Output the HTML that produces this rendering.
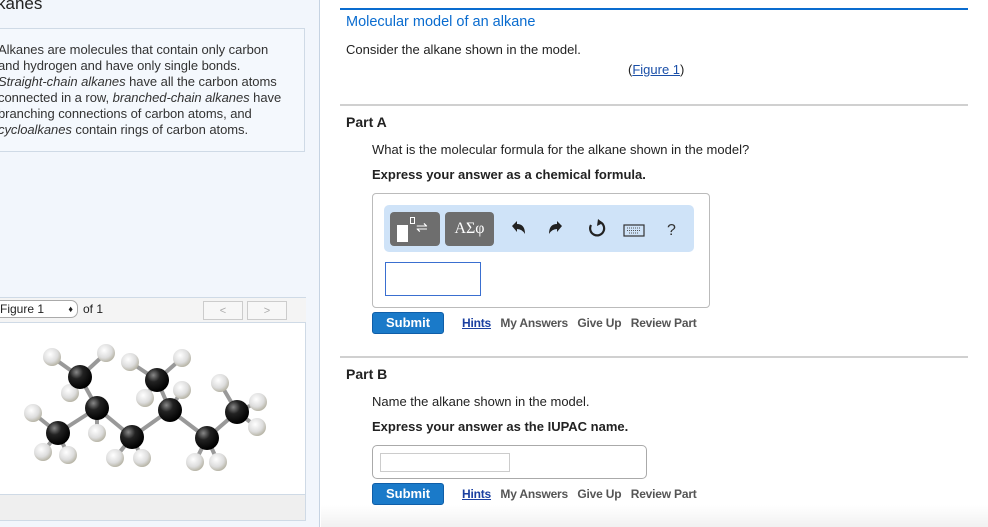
<!DOCTYPE html>
<html><head><meta charset="utf-8"><style>
*{margin:0;padding:0;box-sizing:border-box}
body{width:988px;height:527px;overflow:hidden;background:#fff;font-family:"Liberation Sans",Arial,sans-serif;color:#222;position:relative}
.a{position:absolute}
.t{font-size:13px;line-height:16px;white-space:nowrap}
.b{font-weight:bold}
.sub{background:#1a7ac9;border:1px solid #0f5ea8;border-radius:3px;color:#fff;font-weight:bold;font-size:13px;text-align:center;line-height:20px}
.lnk{font-size:12px;font-weight:bold;color:#555;letter-spacing:-0.2px;white-space:nowrap}
</style></head><body>
<div class="a" style="left:0;top:0;width:320px;height:527px;background:#f2f6fc;border-right:1px solid #c6d3e2"></div>
<div class="a" style="left:-3px;top:-6px;font-size:17px;color:#222">kanes</div>
<div class="a" style="left:-1px;top:28px;width:306px;height:124px;border:1px solid #cfdae6;background:#f4f8fd"></div>
<div class="a t" style="left:-2px;top:42px;color:#333;letter-spacing:-0.05px">Alkanes are molecules that contain only carbon<br>and hydrogen and have only single bonds.<br><i>Straight-chain alkanes</i> have all the carbon atoms<br>connected in a row, <i>branched-chain alkanes</i> have<br>branching connections of carbon atoms, and<br><i>cycloalkanes</i> contain rings of carbon atoms.</div>
<div class="a" style="left:0;top:297px;width:306px;height:26px;background:#f4f4f4;border-top:1px solid #cfdae6;border-bottom:1px solid #cfdae6"></div>
<div class="a" style="left:-2px;top:300px;width:80px;height:18px;border:1px solid #aaa;border-radius:0 7px 7px 0;background:#fff;font-size:12px;line-height:16px;padding-left:1px">Figure 1<span style="position:absolute;right:4px;top:0;font-size:9px">&#9830;</span></div>
<div class="a" style="left:83px;top:302px;font-size:12px">of 1</div>
<div class="a" style="left:203px;top:301px;width:40px;height:19px;border:1px solid #ccc;background:#f7f7f7;color:#aaa;text-align:center;font-size:11px;line-height:18px">&lt;</div>
<div class="a" style="left:247px;top:301px;width:40px;height:19px;border:1px solid #ccc;background:#f7f7f7;color:#aaa;text-align:center;font-size:11px;line-height:18px">&gt;</div>
<div class="a" style="left:0;top:323px;width:306px;height:171px;background:#fff;border-right:1px solid #cfdae6"></div>
<div class="a" style="left:0;top:494px;width:306px;height:27px;background:#efefef;border-top:1px solid #cfdae6;border-bottom:1px solid #cfdae6;border-right:1px solid #cfdae6"></div>
<svg class="a" style="left:0;top:323px" width="306" height="171" viewBox="0 323 306 171">
<defs><radialGradient id="c" cx="35%" cy="30%" r="70%"><stop offset="0" stop-color="#888"/><stop offset=".4" stop-color="#222"/><stop offset="1" stop-color="#000"/></radialGradient>
<radialGradient id="h" cx="40%" cy="35%" r="70%"><stop offset="0" stop-color="#fff"/><stop offset=".6" stop-color="#ddd"/><stop offset="1" stop-color="#b0ad9c"/></radialGradient></defs>
<g stroke="#999" stroke-width="4">
<line x1="58" y1="433" x2="97" y2="408"/><line x1="80" y1="377" x2="97" y2="408"/><line x1="97" y1="408" x2="132" y2="437"/><line x1="132" y1="437" x2="170" y2="410"/><line x1="157" y1="380" x2="170" y2="410"/><line x1="170" y1="410" x2="207" y2="438"/><line x1="207" y1="438" x2="237" y2="412"/>
<line x1="58" y1="433" x2="33" y2="413"/><line x1="58" y1="433" x2="43" y2="452"/><line x1="58" y1="433" x2="68" y2="455"/>
<line x1="80" y1="377" x2="52" y2="357"/><line x1="80" y1="377" x2="106" y2="353"/><line x1="80" y1="377" x2="70" y2="393"/>
<line x1="97" y1="408" x2="97" y2="433"/><line x1="132" y1="437" x2="115" y2="458"/><line x1="132" y1="437" x2="142" y2="458"/>
<line x1="157" y1="380" x2="130" y2="362"/><line x1="157" y1="380" x2="182" y2="358"/><line x1="157" y1="380" x2="145" y2="398"/>
<line x1="170" y1="410" x2="182" y2="390"/><line x1="207" y1="438" x2="195" y2="462"/><line x1="207" y1="438" x2="218" y2="462"/>
<line x1="237" y1="412" x2="220" y2="383"/><line x1="237" y1="412" x2="258" y2="402"/><line x1="237" y1="412" x2="257" y2="427"/>
</g>
<g fill="url(#h)">
<circle cx="33" cy="413" r="9"/><circle cx="43" cy="452" r="9"/><circle cx="68" cy="455" r="9"/><circle cx="52" cy="357" r="9"/><circle cx="106" cy="353" r="9"/><circle cx="70" cy="393" r="9"/><circle cx="97" cy="433" r="9"/><circle cx="115" cy="458" r="9"/><circle cx="142" cy="458" r="9"/><circle cx="130" cy="362" r="9"/><circle cx="182" cy="358" r="9"/><circle cx="145" cy="398" r="9"/><circle cx="182" cy="390" r="9"/><circle cx="220" cy="383" r="9"/><circle cx="195" cy="462" r="9"/><circle cx="218" cy="462" r="9"/><circle cx="258" cy="402" r="9"/><circle cx="257" cy="427" r="9"/>
</g>
<g fill="url(#c)">
<circle cx="58" cy="433" r="12"/><circle cx="80" cy="377" r="12"/><circle cx="97" cy="408" r="12"/><circle cx="132" cy="437" r="12"/><circle cx="157" cy="380" r="12"/><circle cx="170" cy="410" r="12"/><circle cx="207" cy="438" r="12"/><circle cx="237" cy="412" r="12"/>
</g></svg>

<div class="a" style="left:340px;top:8px;width:628px;height:2px;background:#0a6ccf"></div>
<div class="a" style="left:346px;top:14px;font-size:14.5px;color:#0a6ccf">Molecular model of an alkane</div>
<div class="a t" style="left:346px;top:42px">Consider the alkane shown in the model.</div>
<div class="a t" style="left:628px;top:62px">(<span style="color:#1a4fa8;text-decoration:underline">Figure 1</span>)</div>
<div class="a" style="left:340px;top:104px;width:628px;height:2px;background:#d0d0d0"></div>
<div class="a b" style="left:346px;top:114px;font-size:14px">Part A</div>
<div class="a t" style="left:372px;top:142px">What is the molecular formula for the alkane shown in the model?</div>
<div class="a t b" style="left:372px;top:167px">Express your answer as a chemical formula.</div>
<div class="a" style="left:372px;top:193px;width:338px;height:115px;border:1px solid #bbb;border-radius:4px"></div>
<div class="a" style="left:384px;top:205px;width:310px;height:47px;background:#cfe3f8;border-radius:5px"></div>
<div class="a" style="left:390px;top:212px;width:50px;height:34px;background:#6e6e6e;border-radius:4px"></div>
<div class="a" style="left:397px;top:225px;width:11px;height:17px;background:#fff"></div>
<div class="a" style="left:410px;top:217px;width:5px;height:7px;border:1px solid #fff"></div>
<div class="a" style="left:416px;top:219px;color:#fff;font-size:14px">&#8652;</div>
<div class="a" style="left:445px;top:212px;width:49px;height:34px;background:#6e6e6e;border-radius:4px;color:#fff;font-family:'Liberation Serif',serif;font-size:16px;text-align:center;line-height:34px">ΑΣφ</div>
<svg class="a" style="left:505px;top:218px" width="180" height="22" viewBox="0 0 180 22">
<path d="M7 8 L12 3 L12 6 Q20 6 20 16 Q17 11 12 11 L12 14 Z" fill="#222"/>
<path d="M57 8 L52 3 L52 6 Q44 6 44 16 Q47 11 52 11 L52 14 Z" fill="#222"/>
<path d="M95 4 A7 7 0 1 1 86 7" fill="none" stroke="#222" stroke-width="2.2"/><path d="M93 1 L98 5 L92 8 Z" fill="#222"/>
<rect x="119" y="7" width="20" height="11" fill="none" stroke="#333" stroke-width="1.2"/><path d="M122 10h14M122 12.5h14M124 15h10" stroke="#555" stroke-width="1" stroke-dasharray="1 1"/>
<text x="162" y="17" font-family="Liberation Sans" font-size="16" fill="#333">?</text></svg>
<div class="a" style="left:385px;top:262px;width:96px;height:34px;border:1px solid #3a6fd0"></div>
<div class="a sub" style="left:372px;top:312px;width:72px;height:22px">Submit</div>
<div class="a lnk" style="left:462px;top:316px"><span style="color:#1a3fa0;text-decoration:underline">Hints</span>&nbsp;&nbsp; My Answers &nbsp;&nbsp;Give Up &nbsp;&nbsp;Review Part</div>
<div class="a" style="left:340px;top:356px;width:628px;height:2px;background:#d0d0d0"></div>
<div class="a b" style="left:346px;top:366px;font-size:14px">Part B</div>
<div class="a t" style="left:372px;top:394px">Name the alkane shown in the model.</div>
<div class="a t b" style="left:372px;top:419px">Express your answer as the IUPAC name.</div>
<div class="a" style="left:372px;top:445px;width:275px;height:34px;border:1px solid #aaa;border-radius:5px"></div>
<div class="a" style="left:380px;top:453px;width:130px;height:19px;border:1px solid #ccc"></div>
<div class="a sub" style="left:372px;top:483px;width:72px;height:22px">Submit</div>
<div class="a lnk" style="left:462px;top:487px"><span style="color:#1a3fa0;text-decoration:underline">Hints</span>&nbsp;&nbsp; My Answers &nbsp;&nbsp;Give Up &nbsp;&nbsp;Review Part</div>
<div class="a" style="left:321px;top:505px;width:667px;height:22px;background:linear-gradient(#fff,#f1f1f1)"></div>
</body></html>
